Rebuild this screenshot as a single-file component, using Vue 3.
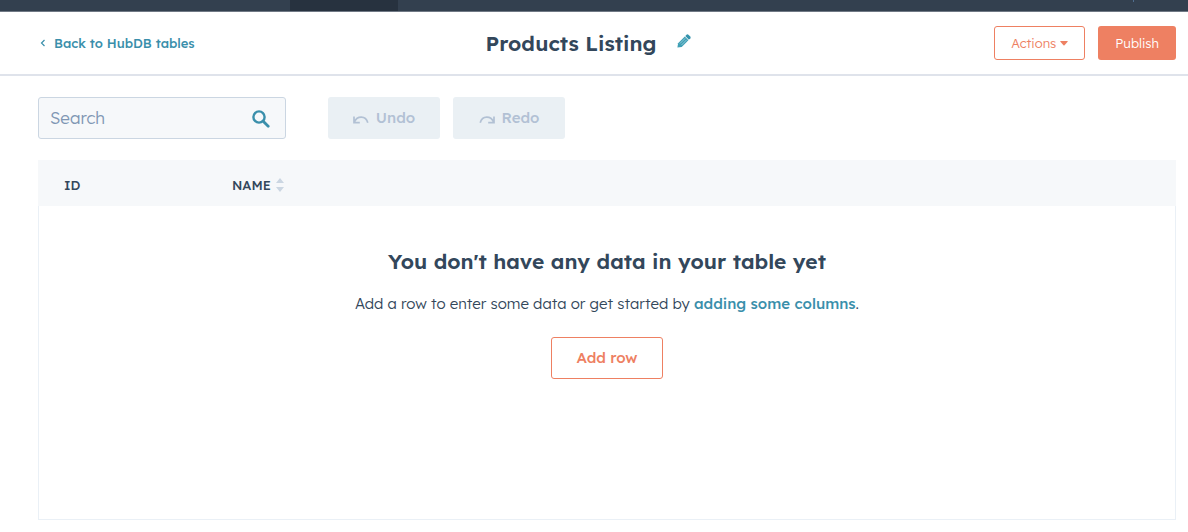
<script setup>
import { ref } from 'vue'

const query = ref('')
</script>

<template>
  <div class="page">
    <nav class="topbar" aria-label="Main">
      <span class="topbar-active"></span>
      <span class="topbar-divider"></span>
    </nav>

    <header class="header">
      <a class="back" href="#tables">
        <svg width="6" height="8" viewBox="0 0 6 8" aria-hidden="true">
          <path d="M4.5 1 L1.5 4 L4.5 7" fill="none" stroke="currentColor" stroke-width="1.2" />
        </svg>
        <span>Back to HubDB tables</span>
      </a>
      <div class="title">
        <h1>Products Listing</h1>
        <button class="edit" type="button" aria-label="Edit name">
          <svg width="14" height="14" viewBox="0 0 14 14" aria-hidden="true">
            <path d="M0.4 13.6 L1.1 9.3 L7.8 2.6 L11.4 6.2 L4.7 12.9 Z" fill="#3f9fb5" />
            <path d="M8.3 2.1 L9.8 0.6 Q10.6 0 11.4 0.7 L13.3 2.6 Q14 3.4 13.4 4.2 L11.9 5.7 Z" fill="#3593ad" />
            <path d="M2.9 9.6 L8.2 4.3 M4.4 11.1 L9.7 5.8" stroke="#b5dde6" stroke-width="0.7" />
          </svg>
        </button>
      </div>
      <div class="header-actions">
        <button class="btn outline small actions" type="button">
          Actions
          <svg width="8" height="5" viewBox="0 0 8 5" aria-hidden="true">
            <path d="M0.6 0 H7.4 Q8 0.2 7.6 0.8 L4.5 4.3 Q4 4.8 3.5 4.3 L0.4 0.8 Q0 0.2 0.6 0 Z" fill="currentColor" />
          </svg>
        </button>
        <button class="btn solid small" type="button">Publish</button>
      </div>
    </header>

    <main class="main">
      <div class="toolbar">
        <label class="search">
          <input v-model="query" type="text" placeholder="Search" aria-label="Search" />
          <svg width="18" height="18" viewBox="0 0 18 18" aria-hidden="true">
            <circle cx="7" cy="7" r="5.6" fill="none" stroke="#3a8fab" stroke-width="2.4" />
            <path d="M11.2 11.2 L16.2 16.2" stroke="#3a8fab" stroke-width="2.8" stroke-linecap="round" />
          </svg>
        </label>
        <div class="history">
          <button class="btn disabled" type="button" disabled>
            <svg width="16" height="9" viewBox="0 0 16 9" aria-hidden="true">
              <path d="M1 1.5 V7.6 H6.8 M1.4 7 C4.2 0.6 12.6 0.2 14.8 7.8" fill="none" stroke="currentColor" stroke-width="1.7" />
            </svg>
            Undo
          </button>
          <button class="btn disabled" type="button" disabled>
            <svg width="16" height="9" viewBox="0 0 16 9" aria-hidden="true">
              <path d="M15 1.5 V7.6 H9.2 M14.6 7 C11.8 0.6 3.4 0.2 1.2 7.8" fill="none" stroke="currentColor" stroke-width="1.7" />
            </svg>
            Redo
          </button>
        </div>
      </div>

      <table class="table">
        <thead>
          <tr>
            <th class="col-id" scope="col">ID</th>
            <th scope="col">
              <span class="sortable">
                NAME
                <svg width="8" height="14" viewBox="0 0 8 14" aria-hidden="true">
                  <path d="M4 0 L8 5 H0 Z M0 9 H8 L4 14 Z" fill="#cbd6e2" />
                </svg>
              </span>
            </th>
          </tr>
        </thead>
      </table>
      <section class="empty">
        <h2>You don't have any data in your table yet</h2>
        <p>Add a row to enter some data or get started by <a href="#columns">adding some columns</a>.</p>
        <button class="btn outline add" type="button">Add row</button>
      </section>
    </main>
  </div>
</template>

<style>
body {
  margin: 0;
  background: #fff;
}
</style>

<style scoped>
.page {
  display: flex;
  flex-direction: column;
  min-height: 100vh;
  box-sizing: border-box;
  color: #33475b;
  font-family: Lexend, Inter, "Open Sans", sans-serif;
  font-weight: 300;
}

.topbar {
  display: flex;
  height: 12px;
  box-sizing: border-box;
  background: #33404f;
  border-bottom: 1px solid #707985;
}

.topbar-active {
  width: 108px;
  margin-left: 290px;
  background: #27323f;
}

.topbar-divider {
  width: 1px;
  height: 2px;
  margin-left: auto;
  margin-right: 54px;
  background: #516f90;
}

.header {
  display: grid;
  grid-template-columns: 1fr auto 1fr;
  align-items: center;
  height: 62px;
  padding: 0 12px;
  border-bottom: 2px solid #dfe3eb;
}

.back {
  display: flex;
  align-items: center;
  gap: 8px;
  padding-left: 28px;
  color: #3a8fab;
  font-size: 13px;
  font-weight: 500;
  text-decoration: none;
}

.title {
  display: flex;
  align-items: center;
  gap: 21px;
  padding-right: 11px;
}

h1 {
  margin: 0;
  font-size: 21px;
  line-height: 28px;
  font-weight: 600;
}

.edit {
  display: flex;
  margin-bottom: 4px;
  padding: 0;
  border: 0;
  background: none;
}

.header-actions {
  display: flex;
  justify-content: flex-end;
  gap: 13px;
}

.btn {
  display: flex;
  align-items: center;
  justify-content: center;
  box-sizing: border-box;
  height: 42px;
  padding: 0 0 2px;
  border: 1px solid transparent;
  border-radius: 3px;
  font-family: inherit;
  font-size: 15px;
  font-weight: 500;
}

.small {
  height: 34px;
  padding: 0 16px;
  font-size: 13px;
  font-weight: 300;
}

.outline {
  background: #fff;
  border-color: #ee8062;
  color: #ee8062;
}

.solid {
  background: #ee8062;
  color: #fff;
}

.actions {
  gap: 4px;
}

.main {
  display: flex;
  flex: 1;
  flex-direction: column;
  padding: 21px 12px 12px 38px;
}

.toolbar {
  display: flex;
  gap: 42px;
  margin-bottom: 21px;
}

.search {
  display: flex;
  align-items: center;
  box-sizing: border-box;
  width: 248px;
  height: 42px;
  padding: 0 15px 0 11px;
  border: 1px solid #cbd6e2;
  border-radius: 3px;
  background: #f6f8fa;
}

.search input {
  flex: 1;
  min-width: 0;
  padding: 0 0 2px;
  border: 0;
  outline: 0;
  background: none;
  color: #33475b;
  font-family: inherit;
  font-size: 17px;
  font-weight: 300;
}

.search input::placeholder {
  color: #8097b4;
  opacity: 1;
}

.search svg {
  margin-top: 2px;
}

.history {
  display: flex;
  gap: 13px;
}

.disabled {
  gap: 7px;
  width: 112px;
  background: #eaf0f4;
  color: #b2c1d4;
}

.disabled svg {
  margin-top: 4px;
}

.table {
  width: 100%;
  border-collapse: collapse;
  background: #f6f8fa;
}

.table th {
  height: 46px;
  box-sizing: border-box;
  padding: 4px 0 0;
  font-size: 13px;
  font-weight: 500;
  text-align: left;
}

.table .col-id {
  width: 194px;
  padding-left: 26px;
}

.sortable {
  display: flex;
  align-items: center;
  gap: 5px;
}

.empty {
  display: flex;
  flex: 1;
  flex-direction: column;
  align-items: center;
  padding: 40px 20px;
  border: 1px solid #eaf0f6;
  border-top: 0;
}

h2 {
  margin: 0 0 16px;
  font-size: 21px;
  line-height: 30px;
  font-weight: 600;
}

p {
  margin: 0 0 21px;
  font-size: 15px;
  line-height: 24px;
}

p a {
  color: #3a8fab;
  font-weight: 500;
  text-decoration: none;
}

.add {
  width: 112px;
}
</style>
